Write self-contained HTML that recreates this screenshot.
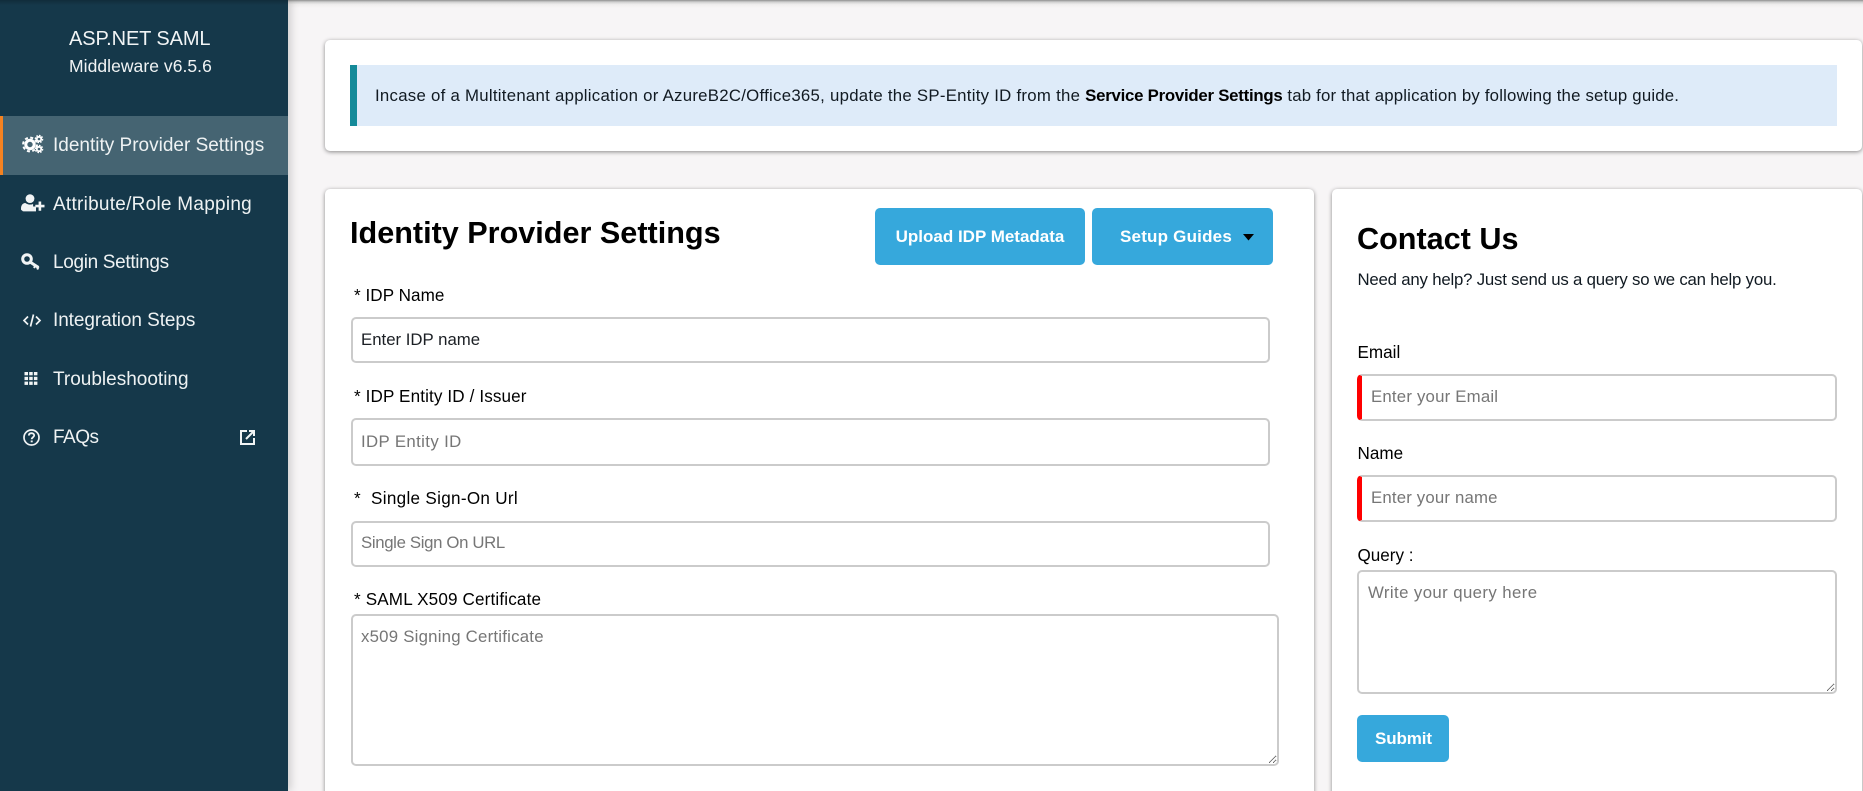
<!DOCTYPE html>
<html lang="en">
<head>
<meta charset="utf-8">
<title>ASP.NET SAML Middleware</title>
<style>
*{box-sizing:border-box}
html,body{margin:0;padding:0;width:1863px;height:791px;overflow:hidden;background:#f7f5f6;font-family:"Liberation Sans",Arial,sans-serif}
#wrap{position:relative;width:1863px;height:791px;overflow:hidden;background:#f7f5f6}
.t{position:absolute;white-space:pre;margin:0}
#side{position:absolute;left:0;top:0;width:288px;height:791px;background:#15384a;color:#f1f4f5;box-shadow:3px 0 8px rgba(0,0,0,.16);z-index:3}
#topsh{position:absolute;left:288px;top:0;width:1575px;height:8px;background:linear-gradient(#8f8f8f 0,#cfcfcf 25%,#efeded 55%,#f7f5f6 100%);z-index:2}
#sidetop{position:absolute;left:0;top:0;width:288px;height:5px;background:linear-gradient(rgba(0,0,0,.22),rgba(0,0,0,0))}
#active{position:absolute;left:0;top:116px;width:288px;height:59px;background:#456472;border-left:3px solid #f58220}
.m{font-size:19px;line-height:24px;color:#eef2f3;left:53px}
svg.i{position:absolute;overflow:visible}
.card{position:absolute;background:#fff;border-radius:5px;box-shadow:0 1px 4px rgba(0,0,0,.45)}
.lab{font-size:17.1px;line-height:22px;color:#000}
input,textarea{position:absolute;margin:0;background:#fff;border:2px solid #cbcbcb;border-radius:5px;outline:0;font-family:"Liberation Sans",Arial,sans-serif;font-size:16.8px;color:#1f2a33}
input{padding:0 8px}
textarea{padding:9px 8px 7px;line-height:24px;display:block}
::placeholder{color:#767676;opacity:1}
.btn{position:absolute;background:#36a8dc;border-radius:5px;color:#fff;font-weight:700;font-size:17px;line-height:22px;text-align:center;border:0;font-family:"Liberation Sans",Arial,sans-serif;padding:0;white-space:pre}
.red{border-left:5px solid #f00;padding-left:9px}
</style>
</head>
<body>
<div id="wrap">
<div id="topsh"></div>
<nav id="side">
  <div id="sidetop"></div>
  <div class="t" style="left:69px;top:27px;font-size:20px;line-height:24px;letter-spacing:-.1px">ASP.NET SAML</div>
  <div class="t" style="left:69px;top:54px;font-size:17.5px;line-height:24px;letter-spacing:.05px">Middleware v6.5.6</div>
  <div id="active"></div>

  <svg class="i" style="left:22px;top:135px" width="22" height="18" viewBox="0 0 22 18" fill="none" stroke="#fff">
    <circle cx="8" cy="9.500" r="4.200" stroke-width="3"/>
    <circle cx="8" cy="9.500" r="6.900" stroke-width="2" stroke-dasharray="3 2.420"/>
    <circle cx="17" cy="4" r="2.200" stroke-width="1.800"/>
    <circle cx="17" cy="4" r="3.600" stroke-width="1.400" stroke-dasharray="1.600 1.200"/>
    <circle cx="17" cy="14" r="2.200" stroke-width="1.800"/>
    <circle cx="17" cy="14" r="3.600" stroke-width="1.400" stroke-dasharray="1.600 1.200"/>
  </svg>
  <div class="t m" style="top:134px;left:53px">Identity Provider Settings</div>

  <svg class="i" style="left:21px;top:194px" width="24" height="18" viewBox="0 0 24 18" fill="#f1f4f5">
    <circle cx="9" cy="4.600" r="4.400"/>
    <path d="M1 16.300C0 16.300 0 15.600 0 14.600 0 11.500 1.600 9 4.300 9 5.600 10 7.300 10.600 9 10.600 10.100 10.600 11.200 10.400 12.100 10V12.500H15V17.400H2.500C1.800 17.400 1.300 17 1 16.300Z"/>
    <path d="M17.600 7.500H20.200V10.800H23.500V13.400H20.200V16.700H17.600V13.400H14.300V10.800H17.600Z"/>
  </svg>
  <div class="t m" style="top:193px;letter-spacing:.26px">Attribute/Role Mapping</div>

  <svg class="i" style="left:21px;top:253px" width="20" height="18" viewBox="0 0 20 18" fill="none" stroke="#f1f4f5">
    <circle cx="6" cy="6" r="4.300" stroke-width="3"/>
    <path d="M9 9L17.500 14.500" stroke-width="3"/>
    <path d="M14.300 12.500L13 15M17.500 14L16.200 16.500" stroke-width="2"/>
  </svg>
  <div class="t m" style="top:251px;letter-spacing:-.33px">Login Settings</div>

  <svg class="i" style="left:23px;top:314px" width="18" height="13" viewBox="0 0 18 13" fill="none" stroke="#f1f4f5" stroke-width="1.700">
    <path d="M5 2.500L1 6.500L5 10.500M13 2.500L17 6.500L13 10.500M10.500 0.500L7.500 12.500"/>
  </svg>
  <div class="t m" style="top:309px;letter-spacing:-.08px">Integration Steps</div>

  <svg class="i" style="left:24px;top:372px" width="14" height="13" viewBox="0 0 14 13" fill="#f1f4f5">
    <rect x="0.500" y="0" width="3.500" height="3.300"/><rect x="5.200" y="0" width="3.500" height="3.300"/><rect x="9.900" y="0" width="3.500" height="3.300"/>
    <rect x="0.500" y="4.800" width="3.500" height="3.300"/><rect x="5.200" y="4.800" width="3.500" height="3.300"/><rect x="9.900" y="4.800" width="3.500" height="3.300"/>
    <rect x="0.500" y="9.600" width="3.500" height="3.300"/><rect x="5.200" y="9.600" width="3.500" height="3.300"/><rect x="9.900" y="9.600" width="3.500" height="3.300"/>
  </svg>
  <div class="t m" style="top:368px">Troubleshooting</div>

  <svg class="i" style="left:23px;top:429px" width="17" height="17" viewBox="0 0 17 17" fill="none" stroke="#f1f4f5">
    <circle cx="8.500" cy="8.500" r="7.500" stroke-width="1.700"/>
    <path d="M5.800 6.600C5.900 5 7 4.200 8.500 4.200C10.100 4.200 11.200 5.100 11.200 6.400C11.200 8.300 8.700 8.200 8.700 10.300" stroke-width="1.800"/>
    <path d="M8.700 11.500V13.300" stroke-width="2"/>
  </svg>
  <div class="t m" style="top:426px;letter-spacing:-.5px">FAQs</div>
  <svg class="i" style="left:239px;top:429px" width="17" height="17" viewBox="0 0 17 17" fill="none" stroke="#f1f4f5" stroke-width="2">
    <path d="M8 2H2V15H15V9"/>
    <path d="M7 10L14.500 2.500"/>
    <path d="M10 1H16V7H14V3H10Z" fill="#f1f4f5" stroke="none"/>
  </svg>
</nav>

<section class="card" style="left:325px;top:40px;width:1537px;height:111px"></section>
<div style="position:absolute;left:350px;top:65px;width:1487px;height:61px;background:#deebf9;border-left:7px solid #148a99"></div>
<div class="t" style="left:375px;top:84px;font-size:16.800px;line-height:24px;letter-spacing:.27px;color:#111a22">Incase of a Multitenant application or AzureB2C/Office365, update the SP-Entity ID from the <b style="letter-spacing:-.24px;color:#000">Service Provider Settings</b><span style="letter-spacing:.19px"> tab for that application by following the setup guide.</span></div>

<section class="card" style="left:325px;top:189px;width:989px;height:640px"></section>
<h2 class="t" style="left:350px;top:215px;font-size:30.600px;line-height:36px;color:#000">Identity Provider Settings</h2>
<button class="btn" style="left:875px;top:208px;width:210px;height:57px">Upload IDP Metadata</button>
<button class="btn" style="left:1092px;top:208px;width:181px;height:57px;text-align:left;padding-left:28px;letter-spacing:.2px">Setup Guides</button>
<svg class="i" style="left:1243px;top:234px" width="11" height="7" viewBox="0 0 11 7"><path d="M0 0H11L5.500 6.500Z" fill="#000"/></svg>

<div class="t lab" style="left:354px;top:285px;letter-spacing:.05px">* IDP Name</div>
<input style="left:351px;top:317px;width:919px;height:46px;color:#1b1f24;letter-spacing:0" value="Enter IDP name">
<div class="t lab" style="left:354px;top:386px;letter-spacing:.12px">* IDP Entity ID / Issuer</div>
<input style="left:351px;top:418px;width:919px;height:48px;letter-spacing:.38px;padding-bottom:1px" placeholder="IDP Entity ID">
<div class="t lab" style="left:354px;top:488px;letter-spacing:.3px">*  Single Sign-On Url</div>
<input style="left:351px;top:521px;width:919px;height:46px;letter-spacing:-.35px;padding-bottom:2px" placeholder="Single Sign On URL">
<div class="t lab" style="left:354px;top:589px;letter-spacing:.15px">* SAML X509 Certificate</div>
<textarea style="left:351px;top:614px;width:928px;height:152px;letter-spacing:.23px" placeholder="x509 Signing Certificate"></textarea>

<section class="card" style="left:1332px;top:189px;width:530px;height:640px"></section>
<h2 class="t" style="left:1357px;top:221px;font-size:30.600px;line-height:36px;color:#000">Contact Us</h2>
<div class="t" style="left:1357.500px;top:268px;font-size:16.800px;line-height:24px;letter-spacing:-.2px;color:#111a22">Need any help? Just send us a query so we can help you.</div>
<div class="t lab" style="left:1357.500px;top:342px">Email</div>
<input class="red" style="left:1357px;top:374px;width:480px;height:47px;letter-spacing:.2px;padding-bottom:1px" placeholder="Enter your Email">
<div class="t lab" style="left:1357.500px;top:443px">Name</div>
<input class="red" style="left:1357px;top:475px;width:480px;height:47px;letter-spacing:.17px;padding-bottom:1px" placeholder="Enter your name">
<div class="t lab" style="left:1357.500px;top:545px">Query :</div>
<textarea style="left:1357px;top:570px;width:480px;height:124px;padding-top:9px;padding-left:9px;letter-spacing:.4px" placeholder="Write your query here"></textarea>
<button class="btn" style="left:1357px;top:715px;width:92px;height:47px;letter-spacing:-.1px;padding-left:1px">Submit</button>
</div>
</body>
</html>
